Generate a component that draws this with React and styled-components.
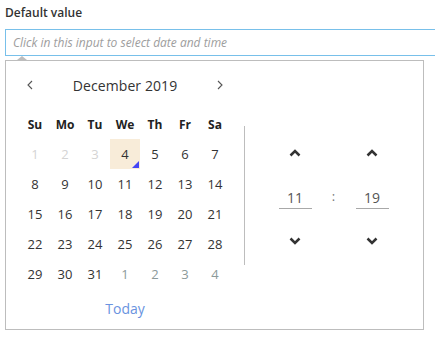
import React from "react";
import styled, { createGlobalStyle } from "styled-components";

const Global = createGlobalStyle`
  html, body { margin: 0; padding: 0; background: #fff; overflow: hidden; }
  body { font-family: "Open Sans", "Noto Sans", sans-serif; color: #333; }
`;

const Page = styled.div`
  padding: 5px 0 0 5px;
  width: 430px;
  overflow: hidden;
`;

const Label = styled.div`
  font-size: 12px;
  font-weight: 600;
  line-height: 16px;
  color: #333;
  margin-bottom: 8px;
`;

const Field = styled.div`
  box-sizing: border-box;
  width: 450px;
  height: 27px;
  border: 1px solid #78c0ea;
  display: flex;
  align-items: center;
`;

const Input = styled.input`
  flex: 1;
  height: 100%;
  margin: 0;
  border: 0;
  background: transparent;
  padding: 0 7px;
  font-family: "Open Sans", sans-serif;
  font-size: 12px;
  outline: none;
  &::placeholder {
    color: #9d9d9d;
    font-style: italic;
  }
`;

const Popup = styled.div`
  position: relative;
  box-sizing: border-box;
  margin-top: 4px;
  width: 419px;
  height: 270px;
  border: 1px solid #bdbdbd;
  display: flex;
  align-items: center;
  &::before {
    content: "";
    position: absolute;
    left: 11px;
    top: -5px;
    border-left: 5px solid transparent;
    border-right: 5px solid transparent;
    border-bottom: 4px solid #bdbdbd;
  }
`;

const Calendar = styled.div`
  align-self: flex-start;
  padding: 12px 14px 0 14px;
  width: 210px;
`;

const Header = styled.div`
  height: 24px;
  display: flex;
  align-items: center;
  justify-content: space-between;
  margin-bottom: 12px;
`;

const NavButton = styled.button`
  width: 20px;
  height: 24px;
  border: 0;
  background: none;
  padding: 0;
  display: flex;
  align-items: center;
  justify-content: center;
  color: #555;
`;

const MonthTitle = styled.div`
  font-size: 14px;
  color: #333;
  letter-spacing: 0.1px;
`;

const Grid = styled.div`
  display: grid;
  grid-template-columns: repeat(7, 30px);
  grid-auto-rows: 30px;
`;

const WeekDay = styled.div`
  display: flex;
  align-items: center;
  justify-content: center;
  font-size: 12px;
  font-weight: 700;
  color: #222;
`;

const dayColor = {
  disabled: "#d4d4d4",
  other: "#8c9a9a",
  normal: "#333",
};

const Day = styled.div`
  position: relative;
  display: flex;
  align-items: center;
  justify-content: center;
  font-size: 13px;
  color: ${(p) => dayColor[p.$kind]};
  background: ${(p) => (p.$today ? "#f8ecd9" : "transparent")};
  ${(p) =>
    p.$today &&
    `
    &::after {
      content: "";
      position: absolute;
      right: 1px;
      bottom: 1px;
      border-left: 7px solid transparent;
      border-bottom: 7px solid #4545f5;
    }
  `}
`;

const TodayButton = styled.div`
  height: 30px;
  margin-top: 4px;
  display: flex;
  align-items: center;
  justify-content: center;
  font-size: 14px;
  color: #6a93e0;
`;

const TimePanel = styled.div`
  box-sizing: border-box;
  width: 178px;
  height: 139px;
  border-left: 1px solid #bdbdbd;
  display: flex;
  align-items: center;
  justify-content: center;
  padding-top: 4px;
`;

const TimeColumn = styled.div`
  width: 33px;
  display: flex;
  flex-direction: column;
  align-items: center;
`;

const Spin = styled.button`
  width: 33px;
  height: 24px;
  border: 0;
  background: none;
  padding: 0;
  display: flex;
  align-items: center;
  justify-content: center;
  color: #333;
`;

const TimeValue = styled.div`
  box-sizing: border-box;
  width: 33px;
  height: 23px;
  margin: 21px 0 20px;
  border-bottom: 1px solid #a8a8a8;
  display: flex;
  align-items: center;
  justify-content: center;
  font-size: 14px;
  color: #555;
`;

const Colon = styled.div`
  width: 44px;
  text-align: center;
  font-size: 13px;
  color: #777;
  margin-bottom: 3px;
`;

const Chevron = ({ dir }) => (
  <svg width="12" height="8" viewBox="0 0 12 8">
    <path
      d={dir === "up" ? "M1.5 6.5 L6 2 L10.5 6.5" : "M1.5 1.5 L6 6 L10.5 1.5"}
      fill="none"
      stroke="currentColor"
      strokeWidth="2.5"
    />
  </svg>
);

const NavArrow = ({ dir }) => (
  <svg width="6" height="10" viewBox="0 0 6 10">
    <path
      d={dir === "left" ? "M5 1 L1 5 L5 9" : "M1 1 L5 5 L1 9"}
      fill="none"
      stroke="currentColor"
      strokeWidth="1.1"
    />
  </svg>
);

const weekDays = ["Su", "Mo", "Tu", "We", "Th", "Fr", "Sa"];

const buildDays = () => {
  const days = [];
  [1, 2, 3].forEach((d) => days.push({ d, kind: "disabled" }));
  for (let d = 4; d <= 31; d++) days.push({ d, kind: "normal", today: d === 4 });
  [1, 2, 3, 4].forEach((d) => days.push({ d, kind: "other" }));
  return days;
};

export default function App() {
  const days = buildDays();
  return (
    <Page>
      <Global />
      <Label>Default value</Label>
      <Field>
        <Input placeholder="Click in this input to select date and time" />
      </Field>
      <Popup>
        <Calendar>
          <Header>
            <NavButton>
              <NavArrow dir="left" />
            </NavButton>
            <MonthTitle>December 2019</MonthTitle>
            <NavButton>
              <NavArrow dir="right" />
            </NavButton>
          </Header>
          <Grid>
            {weekDays.map((w) => (
              <WeekDay key={w}>{w}</WeekDay>
            ))}
            {days.map((x, i) => (
              <Day key={i} $kind={x.kind} $today={x.today}>
                {x.d}
              </Day>
            ))}
          </Grid>
          <TodayButton>Today</TodayButton>
        </Calendar>
        <TimePanel>
          <TimeColumn>
            <Spin>
              <Chevron dir="up" />
            </Spin>
            <TimeValue>11</TimeValue>
            <Spin>
              <Chevron dir="down" />
            </Spin>
          </TimeColumn>
          <Colon>:</Colon>
          <TimeColumn>
            <Spin>
              <Chevron dir="up" />
            </Spin>
            <TimeValue>19</TimeValue>
            <Spin>
              <Chevron dir="down" />
            </Spin>
          </TimeColumn>
        </TimePanel>
      </Popup>
    </Page>
  );
}
